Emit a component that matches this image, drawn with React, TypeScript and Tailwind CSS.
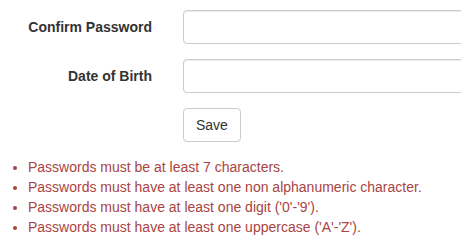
import React from 'react';

const errors = [
    "Passwords must be at least 7 characters.",
    "Passwords must have at least one non alphanumeric character.",
    "Passwords must have at least one digit ('0'-'9').",
    "Passwords must have at least one uppercase ('A'-'Z').",
];

const Field: React.FC<{ label: string; type?: string }> = ({ label, type = 'text' }) => (
    <div className="flex items-start mb-[15px]">
        <label className="w-[152px] shrink-0 text-right font-bold pt-[7px] leading-[20px]">
            {label}
        </label>
        <input
            type={type}
            className="ml-[31px] w-[320px] shrink-0 h-[34px] border border-[#ccc] rounded-[4px] bg-white px-3 shadow-[inset_0_1px_1px_rgba(0,0,0,0.075)] outline-none"
        />
    </div>
);

export default function App() {
    return (
        <div
            className="w-[461px] h-[252px] overflow-hidden bg-white text-[14px] leading-[20px] text-[#333] pt-[10px]"
            style={{ fontFamily: '"Liberation Sans", Arial, sans-serif' }}
        >
            <Field label="Confirm Password" type="password" />
            <Field label="Date of Birth" />
            <div className="flex mb-[15px]">
                <div className="w-[183px] shrink-0" />
                <button
                    type="button"
                    className="h-[34px] px-3 border border-[#ccc] rounded-[4px] bg-white text-[#333]"
                >
                    Save
                </button>
            </div>
            <ul className="list-disc pl-[28px] text-[#a94442]">
                {errors.map((e) => (
                    <li key={e}>{e}</li>
                ))}
            </ul>
        </div>
    );
}
